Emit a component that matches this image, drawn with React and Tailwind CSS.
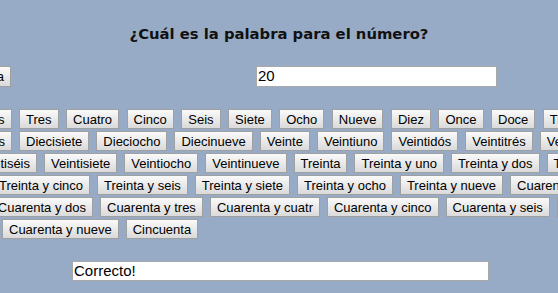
import React from "react";

const Btn = ({ children }) => (
  <button className="h-[20px] shrink-0 whitespace-nowrap border border-[#a0a0a0] bg-linear-to-b from-[#fafafa] to-[#dadada] px-[6px] text-[13px] leading-none text-black">
    {children}
  </button>
);

const App = () => {
  return (
    <div className="min-h-screen overflow-hidden bg-[#97abc6] font-['Liberation_Sans',Arial,sans-serif]">
      {/* ------- Title ------- */}
      <h1 className="pt-[25px] text-center font-['DejaVu_Sans',Verdana,sans-serif] text-[14.8px] font-bold leading-[17px] text-[#111]">
        ¿Cuál es la palabra para el número?
      </h1>

      {/* ------- Number row ------- */}
      <div className="mt-[24px] flex h-[21px]">
        <div className="flex w-[11px] shrink-0 justify-end">
          <button className="h-[21px] shrink-0 whitespace-nowrap border border-[#a0a0a0] bg-linear-to-b from-[#fafafa] to-[#dadada] px-[6px] text-[13px] leading-none">
            Nueva
          </button>
        </div>
        <input
          readOnly
          value="20"
          className="ml-[245px] h-[21px] w-[241px] shrink-0 border border-[#a9a9a9] bg-white px-[1px] text-[15px] text-black outline-none"
        />
      </div>

      {/* ------- Word buttons ------- */}
      <div className="mt-[22px] flex flex-col gap-[2px]">
        <div className="flex gap-[7.5px]">
          <div className="flex w-[11.5px] shrink-0 justify-end gap-[7.5px]">
            <Btn>Uno</Btn>
            <Btn>Dos</Btn>
          </div>
          {["Tres", "Cuatro", "Cinco", "Seis", "Siete", "Ocho", "Nueve", "Diez", "Once", "Doce", "Trece", "Catorce"].map((w) => (
            <Btn key={w}>{w}</Btn>
          ))}
        </div>
        <div className="flex gap-[7px]">
          <div className="flex w-[12px] shrink-0 justify-end gap-[7px]">
            <Btn>Quince</Btn>
            <Btn>Dieciséis</Btn>
          </div>
          {["Diecisiete", "Dieciocho", "Diecinueve", "Veinte", "Veintiuno", "Veintidós", "Veintitrés", "Veinticuatro"].map((w) => (
            <Btn key={w}>{w}</Btn>
          ))}
        </div>
        <div className="flex gap-[7px]">
          <div className="flex w-[37px] shrink-0 justify-end gap-[7px]">
            <Btn>Veinticinco</Btn>
            <Btn>Veintiséis</Btn>
          </div>
          {["Veintisiete", "Veintiocho", "Veintinueve", "Treinta", "Treinta y uno", "Treinta y dos", "Treinta y tres"].map((w) => (
            <Btn key={w}>{w}</Btn>
          ))}
        </div>
        <div className="flex gap-[7px]">
          <div className="flex w-[90px] shrink-0 justify-end gap-[7px]">
            <Btn>Treinta y cuatro</Btn>
            <Btn>Treinta y cinco</Btn>
          </div>
          {["Treinta y seis", "Treinta y siete", "Treinta y ocho", "Treinta y nueve", "Cuarenta"].map((w) => (
            <Btn key={w}>{w}</Btn>
          ))}
        </div>
        <div className="flex gap-[7px]">
          <div className="flex w-[93px] shrink-0 justify-end gap-[7px]">
            <Btn>Cuarenta y uno</Btn>
            <Btn>Cuarenta y dos</Btn>
          </div>
          {["Cuarenta y tres", "Cuarenta y cuatr", "Cuarenta y cinco", "Cuarenta y seis", "Cuarenta y siete"].map((w) => (
            <Btn key={w}>{w}</Btn>
          ))}
        </div>
        <div className="-ml-[5px] flex gap-[7px]">
          <div className="flex w-0 shrink-0 justify-end gap-[7px]">
            <Btn>Cuarenta y ocho</Btn>
          </div>
          <Btn>Cuarenta y nueve</Btn>
          <Btn>Cincuenta</Btn>
        </div>
      </div>

      {/* ------- Result ------- */}
      <input
        readOnly
        value="Correcto!"
        className="ml-[72px] mt-[22px] block h-[20px] w-[417px] border border-[#a9a9a9] bg-white px-[1px] text-[15px] text-black outline-none"
      />
    </div>
  );
};

export default App;
